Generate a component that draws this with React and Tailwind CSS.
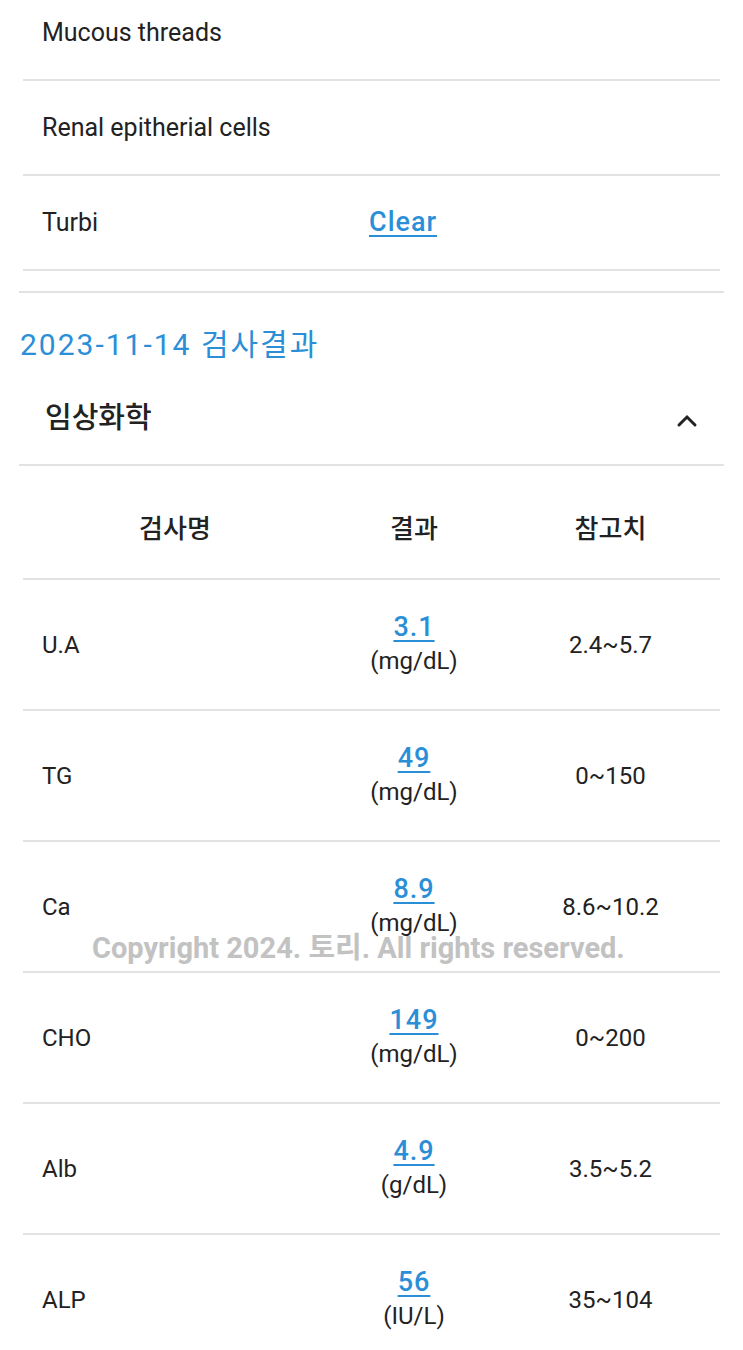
import React from "react";

const FONT = { fontFamily: 'Roboto, "Noto Sans CJK KR", sans-serif' };

const topRows = [
  { name: "Mucous threads" },
  { name: "Renal epitherial cells" },
  { name: "Turbi", value: "Clear" },
];

const rows = [
  { name: "U.A", value: "3.1", unit: "(mg/dL)", ref: "2.4~5.7" },
  { name: "TG", value: "49", unit: "(mg/dL)", ref: "0~150" },
  { name: "Ca", value: "8.9", unit: "(mg/dL)", ref: "8.6~10.2" },
  { name: "CHO", value: "149", unit: "(mg/dL)", ref: "0~200" },
  { name: "Alb", value: "4.9", unit: "(g/dL)", ref: "3.5~5.2" },
  { name: "ALP", value: "56", unit: "(IU/L)", ref: "35~104" },
];

export default function App() {
  return (
    <div className="relative w-[743px] h-[1350px] overflow-hidden bg-white text-[#222]" style={FONT}>
      <div className="px-[19px]">
        <div className="-mt-[14px] border-b-2 border-[#e2e2e2] pb-[20px]">
          <div className="px-[4px]">
            {topRows.map((r) => (
              <div
                key={r.name}
                className="grid grid-cols-[327px_1fr] items-center h-[95px] border-b-2 border-[#e2e2e2] pl-[19px] text-[25px]"
              >
                <span>{r.name}</span>
                {r.value ? (
                  <span className="text-[#2b8fd8] text-[27px] font-medium tracking-[1px] underline underline-offset-[4px] decoration-2">{r.value}</span>
                ) : (
                  <span />
                )}
              </div>
            ))}
          </div>
        </div>

        <div className="mt-[32px] pl-[1px] text-[30px] leading-[40px] text-[#2b8fd8] tracking-[2px]">
          2023-11-14 검사결과
        </div>

        <div className="flex items-center justify-between h-[101px] border-b-2 border-[#e2e2e2] pl-[26px] pr-[26px]">
          <span className="text-[29px] font-medium pt-[8px]">임상화학</span>
          <svg width="22" height="14" viewBox="0 0 22 14" className="mt-[12px]">
            <polyline points="3,11 11,3 19,11" fill="none" stroke="#222" strokeWidth="3" strokeLinecap="round" strokeLinejoin="miter" />
          </svg>
        </div>

        <div className="px-[4px]">
          <div className="grid grid-cols-[304px_174px_1fr] items-center h-[114px] pt-[14px] border-b-2 border-[#e2e2e2] text-[26px] font-medium">
            <span className="text-center">검사명</span>
            <span className="text-center">결과</span>
            <span className="text-center">참고치</span>
          </div>

          {rows.map((r) => (
            <div
              key={r.name}
              className="grid grid-cols-[304px_174px_1fr] items-center h-[131px] border-b-2 border-[#e2e2e2] text-[24px]"
            >
              <span className="pl-[19px]">{r.name}</span>
              <div className="flex flex-col items-center leading-[34px]">
                <span className="text-[#2b8fd8] text-[27px] font-medium tracking-[1px] underline underline-offset-[4px] decoration-2 -mt-[2px]">{r.value}</span>
                <span>{r.unit}</span>
              </div>
              <span className="text-center">{r.ref}</span>
            </div>
          ))}
        </div>
      </div>

      <div className="absolute left-[92px] top-[930px] text-[29px] font-bold text-[#c2c2c2] leading-[36px] whitespace-nowrap">
        Copyright 2024. 토리. All rights reserved.
      </div>
    </div>
  );
}
